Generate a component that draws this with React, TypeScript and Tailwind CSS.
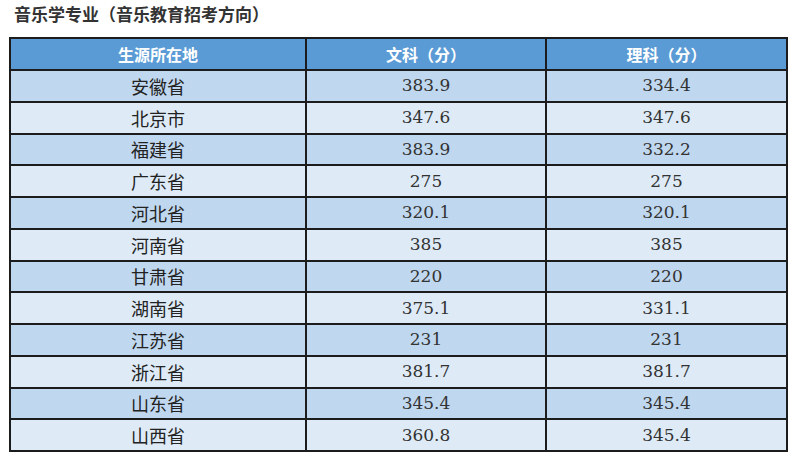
import React from "react";

const rows: [string, string, string][] = [
  ["安徽省", "383.9", "334.4"],
  ["北京市", "347.6", "347.6"],
  ["福建省", "383.9", "332.2"],
  ["广东省", "275", "275"],
  ["河北省", "320.1", "320.1"],
  ["河南省", "385", "385"],
  ["甘肃省", "220", "220"],
  ["湖南省", "375.1", "331.1"],
  ["江苏省", "231", "231"],
  ["浙江省", "381.7", "381.7"],
  ["山东省", "345.4", "345.4"],
  ["山西省", "360.8", "345.4"],
];

const cjk = { fontFamily: '"Noto Sans CJK SC", "Noto Sans", sans-serif' };
const num = { fontFamily: '"DejaVu Serif", "Liberation Serif", serif' };

export default function App() {
  return (
    <div className="w-[795px] h-[463px] bg-white overflow-hidden">
      <div
        className="h-[28px] pl-[14px] pt-[2px] text-[17px] font-bold text-[#333] leading-[24px]"
        style={cjk}
      >
        音乐学专业（音乐教育招考方向）
      </div>
      <div className="pl-[9px] pt-[9px]">
        <table className="border-collapse border-2 border-[#1c1c1c] w-[777px] table-fixed">
          <colgroup>
            <col className="w-[296px]" />
            <col className="w-[240px]" />
            <col className="w-[241px]" />
          </colgroup>
          <thead>
            <tr className="h-[32px] bg-[#5b9bd5]">
              {["生源所在地", "文科（分）", "理科（分）"].map((h) => (
                <th
                  key={h}
                  className="border-2 border-[#1c1c1c] text-white text-[16px] font-bold p-0 leading-none"
                  style={cjk}
                >
                  {h}
                </th>
              ))}
            </tr>
          </thead>
          <tbody>
            {rows.map((r, i) => (
              <tr
                key={r[0]}
                className={`h-[31.75px] ${i % 2 === 0 ? "bg-[#c0d8ef]" : "bg-[#deebf7]"}`}
              >
                <td
                  className="border-2 border-[#1c1c1c] text-center text-[18px] text-[#222] p-0 leading-none"
                  style={cjk}
                >
                  {r[0]}
                </td>
                <td
                  className="border-2 border-[#1c1c1c] text-center text-[17px] text-[#333] p-0 leading-none"
                  style={num}
                >
                  {r[1]}
                </td>
                <td
                  className="border-2 border-[#1c1c1c] text-center text-[17px] text-[#333] p-0 leading-none"
                  style={num}
                >
                  {r[2]}
                </td>
              </tr>
            ))}
          </tbody>
        </table>
      </div>
    </div>
  );
}
